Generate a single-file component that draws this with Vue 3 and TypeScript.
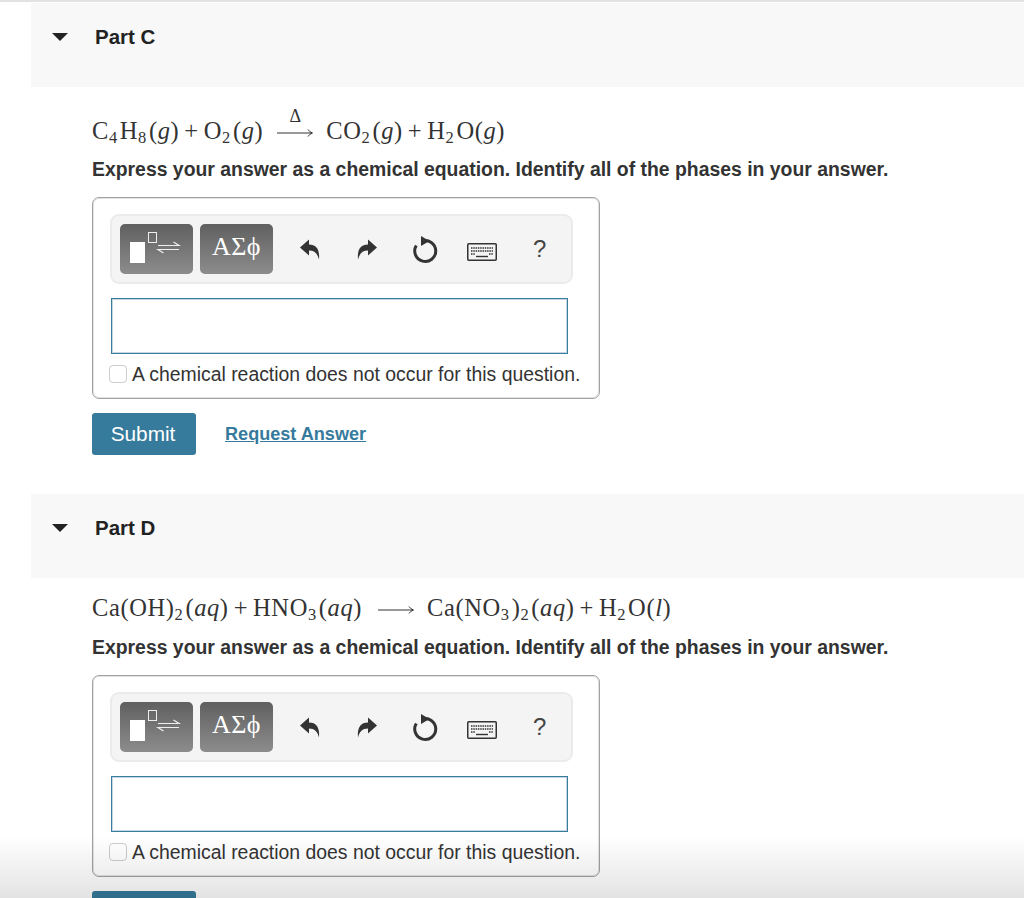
<script setup lang="ts">
type Token = {
  kind: 'text' | 'sub' | 'phase' | 'plus' | 'arrow' | 'heat'
  value?: string
}

type Part = {
  id: string
  title: string
  equation: Token[]
}

const t = (value: string): Token => ({ kind: 'text', value })
const s = (value: string): Token => ({ kind: 'sub', value })
const p = (value: string): Token => ({ kind: 'phase', value })
const plus: Token = { kind: 'plus' }

const parts: Part[] = [
  {
    id: 'c',
    title: 'Part C',
    equation: [
      t('C'), s('4'), t('H'), s('8'), t('('), p('g'), t(')'), plus, t('O'), s('2'), t('('), p('g'), t(')'),
      { kind: 'heat' },
      t('CO'), s('2'), t('('), p('g'), t(')'), plus, t('H'), s('2'), t('O('), p('g'), t(')'),
    ],
  },
  {
    id: 'd',
    title: 'Part D',
    equation: [
      t('Ca(OH)'), s('2'), t('('), p('aq'), t(')'), plus, t('HNO'), s('3'), t('('), p('aq'), t(')'),
      { kind: 'arrow' },
      t('Ca(NO'), s('3'), t(')'), s('2'), t('('), p('aq'), t(')'), plus, t('H'), s('2'), t('O('), p('l'), t(')'),
    ],
  },
]
</script>

<template>
  <div class="page">
    <section v-for="part in parts" :key="part.id" class="part">
      <header class="part__head">
        <span class="part__caret"></span>
        <h2 class="part__title">{{ part.title }}</h2>
      </header>

      <div class="part__body">
        <p class="equation" :class="{ 'equation--heat': part.id === 'c' }">
          <template v-for="(tok, i) in part.equation" :key="i">
            <span v-if="tok.kind === 'text'">{{ tok.value }}</span>
            <span v-else-if="tok.kind === 'sub'" class="equation__sub">{{ tok.value }}</span>
            <i v-else-if="tok.kind === 'phase'" class="equation__phase">{{ tok.value }}</i>
            <span v-else-if="tok.kind === 'plus'" class="equation__plus">+</span>
            <span v-else class="equation__arrow" :class="{ 'equation__arrow--heat': tok.kind === 'heat' }">
              <span v-if="tok.kind === 'heat'" class="equation__delta">Δ</span>
              <svg width="36" height="10" viewBox="0 0 36 10">
                <path d="M0 5H35M31 1.5Q32.5 4 35.5 5Q32.5 6 31 8.5" fill="none" stroke="#333" stroke-width="1" />
              </svg>
            </span>
          </template>
        </p>

        <p class="prompt">Express your answer as a chemical equation. Identify all of the phases in your answer.</p>

        <div class="answer">
          <div class="toolbar">
            <button class="tool-btn" type="button" aria-label="Templates">
              <svg width="73" height="50" viewBox="0 0 73 50">
                <rect x="10" y="18" width="15" height="21" fill="#fff" />
                <rect x="28.5" y="8.5" width="8" height="10" fill="none" stroke="#eee" stroke-width="1" />
                <path d="M38 21.5H59L53.5 18M59 25.5H38L43.5 29" fill="none" stroke="#eee" stroke-width="1.2" />
              </svg>
            </button>
            <button class="tool-btn tool-btn--symbols" type="button">ΑΣϕ</button>

            <svg class="tool-icon tool-undo" width="22" height="24" viewBox="0 0 22 24">
              <path d="M1 9.5 10 1.5V6.5C17 6.5 21 11 20 21.5C18.5 15.5 15.5 12.5 10 12.5V17.5Z" fill="#333" />
            </svg>
            <svg class="tool-icon tool-redo" width="22" height="24" viewBox="0 0 22 24">
              <path d="M21 9.5 12 1.5V6.5C5 6.5 1 11 2 21.5C3.5 15.5 6.5 12.5 12 12.5V17.5Z" fill="#333" />
            </svg>
            <svg class="tool-icon tool-reset" width="26" height="28" viewBox="0 0 26 28">
              <path d="M10 5A10.5 10.5 0 1 1 4.3 9.5" fill="none" stroke="#333" stroke-width="3" />
              <path d="M9 0 17.5 5 9 10Z" fill="#333" />
            </svg>
            <svg class="tool-icon tool-keys" width="30" height="18" viewBox="0 0 30 18">
              <rect x="0.75" y="0.75" width="28.5" height="16.5" rx="1" fill="#f4f4f4" stroke="#333" stroke-width="1.5" />
              <path d="M4 5H26M4 8H26M4 11H8M22 11H26" stroke="#333" stroke-width="1.5" stroke-dasharray="1.5 0.8" />
              <path d="M9 13.5H21" stroke="#333" stroke-width="1.4" />
            </svg>
            <span class="tool-help">?</span>
          </div>

          <div class="answer__input"></div>

          <label class="answer__check">
            <span class="answer__box"></span>
            A chemical reaction does not occur for this question.
          </label>
        </div>

        <div class="actions">
          <button class="submit" type="button">Submit</button>
          <a class="request" href="#">Request Answer</a>
        </div>
      </div>
    </section>

    <div class="fade"></div>
  </div>
</template>

<style>
html,
body {
  margin: 0;
  height: 898px;
  overflow: hidden;
  background: #fff;
}
</style>

<style scoped>
.page {
  position: relative;
  height: 898px;
  overflow: hidden;
  padding-top: 1px;
  box-sizing: border-box;
  border-top: 2px solid #e2e2e2;
  font-family: "Liberation Sans", Arial, sans-serif;
  color: #333;
}

.part__head {
  display: flex;
  align-items: flex-start;
  height: 84px;
  margin-left: 31px;
  background: #f8f8f8;
}

.part__caret {
  width: 0;
  height: 0;
  margin: 30px 0 0 21px;
  border-left: 8px solid transparent;
  border-right: 8px solid transparent;
  border-top: 8px solid #222;
}

.part__title {
  margin: 20px 0 0 27px;
  font-size: 20.5px;
  line-height: 28px;
  font-weight: 700;
  color: #222;
}

.part__body {
  padding: 0 0 0 92px;
}

.equation {
  display: flex;
  align-items: baseline;
  height: 31px;
  margin: 15px 0 0;
  font-family: "Liberation Serif", "Times New Roman", serif;
  font-size: 24.5px;
  line-height: 30px;
  letter-spacing: 0.6px;
  color: #333;
}

.equation--heat {
  height: 30px;
  margin-top: 29px;
}

.equation__sub {
  position: relative;
  top: 4px;
  margin-right: 2px;
  font-size: 16.5px;
}

.equation__plus {
  margin: 0 5px;
}

.equation__arrow {
  position: relative;
  display: inline-block;
  width: 36px;
  margin: 0 13px 0 16px;
}

.equation__arrow--heat {
  margin-left: 14px;
}

.equation__arrow svg {
  display: block;
  position: absolute;
  left: 0;
  bottom: 1px;
}

.equation__delta {
  position: absolute;
  left: 0;
  right: 0;
  bottom: 15px;
  text-align: center;
  font-size: 18px;
  line-height: 16px;
  letter-spacing: 0;
}

.prompt {
  margin: 11px 0 0;
  font-size: 19.4px;
  line-height: 24px;
  font-weight: 700;
  color: #333;
  white-space: nowrap;
}

.answer {
  width: 508px;
  height: 202px;
  margin-top: 16px;
  padding: 16px 26px 0 17px;
  box-sizing: border-box;
  border: 1px solid #a2a2a2;
  border-radius: 7px;
  box-shadow: inset 0 0 0 1px #e2e2e2;
  background: #fff;
}

.toolbar {
  display: flex;
  align-items: center;
  height: 70px;
  box-sizing: border-box;
  padding-left: 8px;
  background: #f4f4f4;
  border: 2px solid #ebebeb;
  border-radius: 9px;
}

.tool-btn {
  width: 73px;
  height: 50px;
  padding: 0;
  border: 0;
  border-radius: 5px;
  background: linear-gradient(#606060, #8c8c8c);
  color: #fff;
}

.tool-btn svg {
  display: block;
}

.tool-btn--symbols {
  margin-left: 7px;
  font-family: "Liberation Serif", serif;
  font-size: 26px;
  letter-spacing: 0.5px;
  padding-bottom: 4px;
}

.tool-icon {
  flex: none;
}

.tool-undo {
  margin: 2px 0 0 26px;
}

.tool-redo {
  margin: 2px 0 0 35px;
}

.tool-reset {
  margin: 2px 0 0 34px;
}

.tool-keys {
  margin: 6px 0 0 29px;
}

.tool-help {
  margin-left: 36px;
  font-size: 24px;
  color: #444;
}

.answer__input {
  width: 457px;
  height: 56px;
  margin: 14px 0 0 1px;
  box-sizing: border-box;
  border: 1px solid #3a7c9d;
  box-shadow: inset 0 0 0 1px rgba(58, 124, 157, 0.3);
}

.answer__check {
  display: flex;
  align-items: center;
  gap: 5px;
  margin: 8px 0 0 -1px;
  font-size: 19.4px;
  line-height: 24px;
  color: #333;
  white-space: nowrap;
}

.answer__box {
  flex: none;
  width: 18px;
  height: 18px;
  box-sizing: border-box;
  border: 1px solid #ccc;
  border-radius: 4px;
  background: #fff;
}

.actions {
  display: flex;
  align-items: center;
  gap: 29px;
  height: 42px;
  margin-top: 14px;
  margin-bottom: 39px;
}

.submit {
  width: 104px;
  height: 42px;
  padding: 0 2px 0 0;
  border: 0;
  border-radius: 3px;
  background: #367a9c;
  color: #fff;
  font-family: inherit;
  font-size: 20.8px;
}

.request {
  font-size: 18.1px;
  font-weight: 700;
  color: #367a9c;
}

.fade {
  position: absolute;
  left: 0;
  right: 0;
  bottom: 0;
  height: 62px;
  background: linear-gradient(rgba(0, 0, 0, 0), rgba(0, 0, 0, 0.11));
  pointer-events: none;
}
</style>
